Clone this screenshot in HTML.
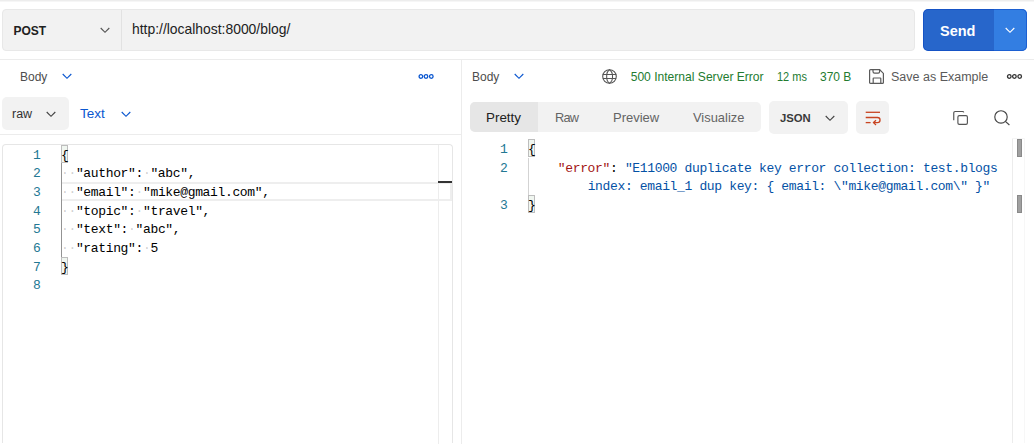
<!DOCTYPE html>
<html><head><meta charset="utf-8">
<style>
*{box-sizing:border-box;margin:0;padding:0}
html,body{width:1034px;height:444px;overflow:hidden;background:#fff;font-family:"Liberation Sans",sans-serif;color:#212121}
.a{position:absolute}
.t{position:absolute;white-space:pre;line-height:1}
svg{position:absolute;overflow:visible}
.mono{font-family:"Liberation Mono",monospace}
.ln{position:absolute;font-family:"Liberation Mono",monospace;font-size:13px;letter-spacing:-0.35px;line-height:18.63px;padding-top:2px;text-align:right;color:#237893;white-space:pre}
.cl{position:absolute;font-family:"Liberation Mono",monospace;font-size:13px;letter-spacing:-0.35px;line-height:18.63px;padding-top:2px;color:#000;white-space:pre}
.ws{color:rgba(51,51,51,0.25)}
</style></head><body>
<!-- top line -->
<div class="a" style="left:0;top:0;width:1034px;height:1px;background:#ededed"></div><div class="a" style="left:0;top:1px;width:1034px;height:1px;background:#f6f6f6"></div>

<!-- URL bar -->
<div class="a" style="left:2px;top:9px;width:913px;height:42px;background:#f2f2f2;border:1px solid #e8e8e8;border-radius:4px"></div>
<div class="a" style="left:121px;top:10px;width:1px;height:40px;background:#e2e2e2"></div>
<div class="t" style="left:13.5px;top:24.5px;font-size:12px;font-weight:bold;color:#212121">POST</div>
<svg style="left:100px;top:27px" width="10" height="7" viewBox="0 0 10 7"><path d="M0.7 1 L5 5.3 L9.3 1" fill="none" stroke="#555" stroke-width="1.15"/></svg>
<div class="t" style="left:132px;top:22.6px;font-size:13.9px;color:#212121">http://localhost:8000/blog/</div>

<!-- Send -->
<div class="a" style="left:923px;top:9px;width:104px;height:42px;border-radius:5px;overflow:hidden;background:#2766cb">
  <div class="a" style="left:71px;top:0;width:33px;height:42px;background:#337ee2"></div>
  <div class="a" style="left:0;top:0;width:104px;height:42px;border-radius:5px;border:1px solid rgba(0,60,190,0.45)"></div>
</div>
<div class="t" style="left:940px;top:23.5px;font-size:14.5px;font-weight:bold;color:#fff">Send</div>
<svg style="left:1005px;top:27px" width="10" height="7" viewBox="0 0 10 7"><path d="M0.7 1 L5 5.3 L9.3 1" fill="none" stroke="#fff" stroke-width="1.15"/></svg>

<!-- separators -->
<div class="a" style="left:0;top:59px;width:1034px;height:1px;background:#ececec"></div>
<div class="a" style="left:461px;top:60px;width:1px;height:384px;background:#ececec"></div>
<div class="a" style="left:0;top:134px;width:461px;height:1px;background:#ececec"></div>

<!-- left header -->
<div class="t" style="left:20px;top:71px;font-size:12px;color:#4d4d4d">Body</div>
<svg style="left:62px;top:73px" width="10" height="7" viewBox="0 0 10 7"><path d="M0.7 1 L5 5.3 L9.3 1" fill="none" stroke="#0b57d0" stroke-width="1.15"/></svg>
<svg style="left:417px;top:73px" width="18" height="7" viewBox="0 0 18 7">
  <circle cx="3.9" cy="3.5" r="1.8" fill="none" stroke="#0b57d0" stroke-width="1.3"/>
  <circle cx="9" cy="3.5" r="1.8" fill="none" stroke="#0b57d0" stroke-width="1.3"/>
  <circle cx="14.3" cy="3.5" r="1.8" fill="none" stroke="#0b57d0" stroke-width="1.3"/>
</svg>

<div class="a" style="left:2px;top:97px;width:67px;height:33px;background:#f2f2f2;border-radius:5px"></div>
<div class="t" style="left:12px;top:108px;font-size:12.5px;color:#333">raw</div>
<svg style="left:46px;top:111px" width="10" height="7" viewBox="0 0 10 7"><path d="M0.7 1 L5 5.3 L9.3 1" fill="none" stroke="#444" stroke-width="1.15"/></svg>
<div class="t" style="left:80px;top:107px;font-size:13.5px;color:#0b57d0">Text</div>
<svg style="left:121px;top:111px" width="10" height="7" viewBox="0 0 10 7"><path d="M0.7 1 L5 5.3 L9.3 1" fill="none" stroke="#0b57d0" stroke-width="1.15"/></svg>

<!-- right header -->
<div class="t" style="left:472px;top:71px;font-size:12px;color:#4d4d4d">Body</div>
<svg style="left:514px;top:73px" width="10" height="7" viewBox="0 0 10 7"><path d="M0.7 1 L5 5.3 L9.3 1" fill="none" stroke="#0b57d0" stroke-width="1.15"/></svg>
<svg style="left:602px;top:69px" width="16" height="16" viewBox="0 0 16 16">
  <circle cx="7.5" cy="7.5" r="6.8" fill="none" stroke="#555" stroke-width="1.1"/>
  <path d="M7.5 0.7 C5.7 2.3 4.7 4 4.7 5.5 V9.5 C4.7 11 5.7 12.7 7.5 14.3 C9.3 12.7 10.5 11 10.5 9.5 V5.5 C10.5 4 9.3 2.3 7.5 0.7 Z" fill="none" stroke="#555" stroke-width="1.05"/>
  <path d="M0.9 5.5 H14.1 M0.9 9.5 H14.1" stroke="#555" stroke-width="1"/>
</svg>
<div class="t" style="left:630.7px;top:71px;font-size:12.08px;color:#237b30">500 Internal Server Error</div>
<div class="t" style="left:777px;top:71px;font-size:12px;transform:scaleX(0.915);transform-origin:0 0;color:#237b30">12 ms</div>
<div class="t" style="left:820px;top:71px;font-size:12px;color:#237b30">370 B</div>
<svg style="left:869px;top:69px" width="16" height="16" viewBox="0 0 16 16">
  <path d="M1.6 0.6 H10.6 L14.4 4.4 V13.4 Q14.4 14.4 13.4 14.4 H1.6 Q0.6 14.4 0.6 13.4 V1.6 Q0.6 0.6 1.6 0.6 Z" fill="none" stroke="#5a5a5a" stroke-width="1.2"/>
  <path d="M4 0.6 V2.6 Q4 4.2 5.6 4.2 H9.2 Q10.6 4.2 10.6 2.6 V0.6" fill="none" stroke="#5a5a5a" stroke-width="1.2"/>
  <path d="M4.2 14.4 V9.6 Q4.2 9 4.8 9 H11.2 Q11.8 9 11.8 9.6 V14.4" fill="none" stroke="#5a5a5a" stroke-width="1.2"/>
</svg>
<div class="t" style="left:891px;top:71px;font-size:12.5px;color:#5a5a5a">Save as Example</div>
<svg style="left:1006px;top:73px" width="18" height="7" viewBox="0 0 18 7">
  <circle cx="3.3" cy="3.5" r="1.8" fill="none" stroke="#333" stroke-width="1.3"/>
  <circle cx="8.4" cy="3.5" r="1.8" fill="none" stroke="#333" stroke-width="1.3"/>
  <circle cx="13.7" cy="3.5" r="1.8" fill="none" stroke="#333" stroke-width="1.3"/>
</svg>

<!-- segmented control -->
<div class="a" style="left:470px;top:102px;width:291px;height:30px;background:#f2f2f2;border-radius:5px;overflow:hidden">
  <div class="a" style="left:0;top:0;width:68px;height:30px;background:#e6e6e6"></div>
</div>
<div class="t" style="left:486px;top:111px;font-size:13.4px;color:#212121">Pretty</div>
<div class="t" style="left:555px;top:112px;font-size:12.8px;letter-spacing:-0.75px;color:#646464">Raw</div>
<div class="t" style="left:613px;top:111px;font-size:13px;color:#646464">Preview</div>
<div class="t" style="left:693px;top:112px;font-size:12.9px;color:#646464">Visualize</div>

<div class="a" style="left:769px;top:101px;width:79px;height:33px;background:#f2f2f2;border-radius:5px"></div>
<div class="t" style="left:780px;top:113px;font-size:11.3px;font-weight:bold;color:#3a3a3a">JSON</div>
<svg style="left:825px;top:115px" width="10" height="7" viewBox="0 0 10 7"><path d="M0.7 1 L5 5.3 L9.3 1" fill="none" stroke="#444" stroke-width="1.15"/></svg>

<div class="a" style="left:856px;top:101px;width:33px;height:33px;background:#f2f2f2;border-radius:5px"></div>
<svg style="left:865px;top:111px" width="16" height="16" viewBox="0 0 16 16">
  <path d="M0.7 1.3 H15" stroke="#c84421" stroke-width="1.3"/>
  <path d="M0.7 6.5 H12.5 A2.55 2.55 0 0 1 12.5 11.6 H8.6" fill="none" stroke="#c84421" stroke-width="1.3"/>
  <path d="M11 9.2 L8.5 11.6 L11 14" fill="none" stroke="#c84421" stroke-width="1.3"/>
  <path d="M0.7 11.6 H5.6" stroke="#c84421" stroke-width="1.3"/>
</svg>

<svg style="left:952px;top:110px" width="18" height="16" viewBox="0 0 18 16">
  <path d="M1.75 10.3 V2.9 Q1.75 1.45 3.2 1.45 H10.6 Q11.6 1.45 11.8 2.4" fill="none" stroke="#555" stroke-width="1.15"/>
  <rect x="5.9" y="5.6" width="9.5" height="8.8" rx="1.4" fill="none" stroke="#555" stroke-width="1.15"/>
</svg>
<svg style="left:993px;top:109px" width="18" height="18" viewBox="0 0 18 18">
  <circle cx="8" cy="7.9" r="6.2" fill="none" stroke="#444" stroke-width="1.15"/>
  <path d="M12.4 12.3 L16.4 16" stroke="#444" stroke-width="1.15"/>
</svg>

<!-- left editor -->
<div class="a" style="left:2px;top:144px;width:451px;height:299px;border:1px solid #e6e6e6;border-bottom:0;border-radius:4px 4px 0 0"></div>

<!-- left editor content -->
<div class="a" style="left:62px;top:182.06px;width:389.5px;height:18.63px;border:2px solid #eeeeee;border-left:0"></div>
<div class="a" style="left:61px;top:163.43px;width:1px;height:93.15px;background:#939393"></div>
<div class="a" style="left:61px;top:144.80px;width:7px;height:18.3px;background:rgba(0,100,0,0.06);border:1px solid #bdbdbd"></div>
<div class="a" style="left:61px;top:256.58px;width:7px;height:18.3px;background:rgba(0,100,0,0.06);border:1px solid #bdbdbd"></div>
<div class="ln" style="left:10px;top:144.80px;width:30.5px">1</div>
<div class="cl" style="left:61.0px;top:144.80px">{</div>
<div class="ln" style="left:10px;top:163.43px;width:30.5px">2</div>
<div class="cl" style="left:61.0px;top:163.43px"><span class="ws">·</span><span class="ws">·</span>"author":<span class="ws">·</span>"abc",</div>
<div class="ln" style="left:10px;top:182.06px;width:30.5px">3</div>
<div class="cl" style="left:61.0px;top:182.06px"><span class="ws">·</span><span class="ws">·</span>"email":<span class="ws">·</span>"mike@gmail.com",</div>
<div class="ln" style="left:10px;top:200.69px;width:30.5px">4</div>
<div class="cl" style="left:61.0px;top:200.69px"><span class="ws">·</span><span class="ws">·</span>"topic":<span class="ws">·</span>"travel",</div>
<div class="ln" style="left:10px;top:219.32px;width:30.5px">5</div>
<div class="cl" style="left:61.0px;top:219.32px"><span class="ws">·</span><span class="ws">·</span>"text":<span class="ws">·</span>"abc",</div>
<div class="ln" style="left:10px;top:237.95px;width:30.5px">6</div>
<div class="cl" style="left:61.0px;top:237.95px"><span class="ws">·</span><span class="ws">·</span>"rating":<span class="ws">·</span>5</div>
<div class="ln" style="left:10px;top:256.58px;width:30.5px">7</div>
<div class="cl" style="left:61.0px;top:256.58px">}</div>
<div class="ln" style="left:10px;top:275.21px;width:30.5px">8</div>
<div class="a" style="left:438px;top:145px;width:1px;height:299px;background:#ededed"></div>
<div class="a" style="left:438px;top:181px;width:14px;height:2px;background:#333"></div>
<!-- right editor -->
<div class="a" style="left:528px;top:157.73px;width:1px;height:37.26px;background:#d3d3d3"></div>
<div class="a" style="left:528px;top:139.10px;width:7px;height:18.3px;background:rgba(0,100,0,0.06);border:1px solid #bdbdbd"></div>
<div class="a" style="left:528px;top:194.99px;width:7px;height:18.3px;background:rgba(0,100,0,0.06);border:1px solid #bdbdbd"></div>
<div class="ln" style="left:470px;top:139.10px;width:37.5px">1</div>
<div class="ln" style="left:470px;top:157.73px;width:37.5px">2</div>
<div class="ln" style="left:470px;top:194.99px;width:37.5px">3</div>
<div class="cl" style="left:528.0px;top:139.10px">{</div>
<div class="cl" style="left:528.0px;top:157.73px">    <span style="color:#a31515">"error"</span>: <span style="color:#0451a5">"E11000 duplicate key error collection: test.blogs</span></div>
<div class="cl" style="left:528.0px;top:176.36px">        <span style="color:#0451a5">index: email_1 dup key: { email: \"mike@gmail.com\" }"</span></div>
<div class="cl" style="left:528.0px;top:194.99px">}</div>
<div class="a" style="left:1012px;top:138px;width:1px;height:305px;background:#ececec"></div>
<div class="a" style="left:1012px;top:138px;width:13px;height:1px;background:#f5f5f5"></div>
<div class="a" style="left:1024px;top:138px;width:1px;height:305px;background:#f7f7f7"></div>
<div class="a" style="left:1017px;top:139.10px;width:5px;height:18.03px;background:#a0a0a0;border:1px solid #8a8a8a"></div>
<div class="a" style="left:1017px;top:194.99px;width:5px;height:18.03px;background:#a0a0a0;border:1px solid #8a8a8a"></div>
</body></html>
